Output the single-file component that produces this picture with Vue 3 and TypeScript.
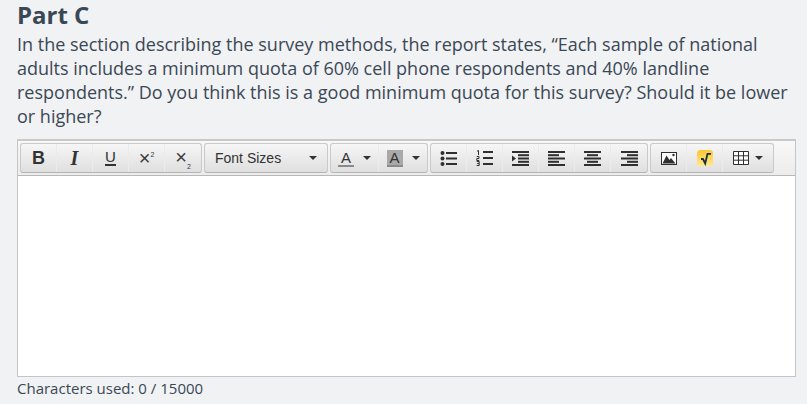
<script setup lang="ts">
const title = 'Part C'
const question = 'In the section describing the survey methods, the report states, “Each sample of national adults includes a minimum quota of 60% cell phone respondents and 40% landline respondents.” Do you think this is a good minimum quota for this survey? Should it be lower or higher?'
</script>

<template>
  <main class="page">
    <h2 class="title">{{ title }}</h2>
    <p class="question">{{ question }}</p>
    <section class="editor">
      <div class="toolbar">
        <div class="group">
          <button class="btn"><span class="bold">B</span></button>
          <button class="btn"><span class="italic">I</span></button>
          <button class="btn"><span class="under">U</span></button>
          <button class="btn"><span class="script">×<sup>2</sup></span></button>
          <button class="btn last"><span class="script">×<sub>2</sub></span></button>
        </div>
        <div class="group">
          <button class="btn select last"><span>Font Sizes</span><i class="caret"></i></button>
        </div>
        <div class="group">
          <button class="btn color"><span class="letter">A<b class="rule"></b></span><i class="caret"></i></button>
          <button class="btn color last"><span class="letter shaded">A<b class="rule"></b></span><i class="caret"></i></button>
        </div>
        <div class="group">
          <button class="btn">
            <svg width="18" height="15" viewBox="0 0 18 15"><g fill="#2f2f2f"><circle cx="2.5" cy="2" r="2"/><circle cx="2.5" cy="7.5" r="2"/><circle cx="2.5" cy="13" r="2"/><rect x="6" y="1" width="11" height="2"/><rect x="6" y="6.5" width="11" height="2"/><rect x="6" y="12" width="11" height="2"/></g></svg>
          </button>
          <button class="btn">
            <svg width="18" height="16" viewBox="0 0 18 16"><g fill="#2f2f2f"><rect x="7" y="1" width="10" height="2"/><rect x="7" y="7" width="10" height="2"/><rect x="7" y="13" width="10" height="2"/></g><g fill="none" stroke="#2f2f2f" stroke-width="1"><path d="M1 1.2 2.5 .5V5"/><path d="M.7 6.5H3V8.500H.8V10.500H3.200"/><path d="M.7 11.500H3.200V15.500H.7M1.200 13.500H3"/></g></svg>
          </button>
          <button class="btn">
            <svg width="17" height="15" viewBox="0 0 17 15"><g fill="#2f2f2f"><rect y="0" width="17" height="2"/><rect x="6" y="3.200" width="11" height="2"/><rect x="6" y="6.500" width="11" height="2"/><rect x="6" y="9.800" width="11" height="2"/><rect y="13" width="17" height="2"/><path d="M0 4.500 4 7.500 0 10.500Z"/></g></svg>
          </button>
          <button class="btn">
            <svg width="17" height="15" viewBox="0 0 17 15"><g fill="#2f2f2f"><rect width="17" height="2"/><rect y="3.200" width="11" height="2"/><rect y="6.500" width="17" height="2"/><rect y="9.800" width="11" height="2"/><rect y="13" width="17" height="2"/></g></svg>
          </button>
          <button class="btn">
            <svg width="17" height="15" viewBox="0 0 17 15"><g fill="#2f2f2f"><rect width="17" height="2"/><rect x="3" y="3.200" width="11" height="2"/><rect y="6.500" width="17" height="2"/><rect x="3" y="9.800" width="11" height="2"/><rect y="13" width="17" height="2"/></g></svg>
          </button>
          <button class="btn last">
            <svg width="17" height="15" viewBox="0 0 17 15"><g fill="#2f2f2f"><rect width="17" height="2"/><rect x="6" y="3.200" width="11" height="2"/><rect y="6.500" width="17" height="2"/><rect x="6" y="9.800" width="11" height="2"/><rect y="13" width="17" height="2"/></g></svg>
          </button>
        </div>
        <div class="group">
          <button class="btn">
            <svg width="16" height="13" viewBox="0 0 16 13"><rect x=".5" y=".5" width="15" height="12" fill="#fff" stroke="#2f2f2f"/><path d="M1.500 11.500 5.500 3.500 8.500 8 10 6 14.500 11.500Z" fill="#2f2f2f"/><circle cx="12.500" cy="3" r="1.200" fill="#2f2f2f"/></svg>
          </button>
          <button class="btn">
            <svg width="16" height="16" viewBox="0 0 16 16"><defs><linearGradient id="mathGrad" x1="0" y1="0" x2="0" y2="1"><stop offset="0" stop-color="#ffc531"/><stop offset="1" stop-color="#ffe98f"/></linearGradient></defs><rect width="16" height="16" rx="3.500" fill="url(#mathGrad)"/><path d="M4 9H6L8.200 13.500 10.500 3.800H14" fill="none" stroke="#12323d" stroke-width="1.800"/></svg>
          </button>
          <button class="btn tablebtn last">
            <svg width="16" height="14" viewBox="0 0 16 14"><path d="M.5.500H15.500V13.500H.5ZM.5 4.800H15.500M.5 9.200H15.500M5.500.500V13.500M10.500.500V13.500" fill="#fff" stroke="#2f2f2f"/></svg>
            <i class="caret"></i>
          </button>
        </div>
      </div>
      <div class="content"></div>
    </section>
    <div class="count">Characters used: 0 / 15000</div>
  </main>
</template>

<style scoped>
.page {
  width: 807px;
  height: 404px;
  box-sizing: border-box;
  padding: 0 11px 0 17px;
  background: #f1f2f4;
  font-family: "Open Sans", sans-serif;
  color: #3b4854;
  overflow: hidden;
}
.title {
  margin: 0 0 2px;
  font-size: 24px;
  line-height: 30px;
  font-weight: 700;
  color: #3a4754;
}
.question {
  margin: 0 0 11px;
  font-size: 18px;
  line-height: 24px;
  width: 775px;
  color: #3b4854;
}
.editor {
  width: 779px;
  height: 238px;
  box-sizing: border-box;
  border: 1px solid #c5c5c5;
  border-top: 2px solid #c9c9c9;
  background: #fff;
  display: flex;
  flex-direction: column;
}
.toolbar {
  height: 35px;
  box-sizing: border-box;
  display: flex;
  gap: 3px;
  padding: 2px 0 0 3px;
  background: linear-gradient(#f8f8f8, #ececec);
  border-bottom: 1px solid #b8b8b8;
}
.group {
  display: flex;
  box-sizing: border-box;
  height: 30px;
  border: 1px solid #c9c9c9;
  border-bottom-color: #b5b5b5;
  border-radius: 3px;
  background: linear-gradient(#f6f6f6, #dfdfdf);
  margin-left: -1px;
}
.btn {
  width: 36px;
  height: 28px;
  padding: 0;
  border: 0;
  border-right: 1px solid #ebebeb;
  background: transparent;
  display: flex;
  align-items: center;
  justify-content: center;
  color: #333;
  font-family: "Liberation Sans", sans-serif;
}
.btn.last { border-right: 0; }
.bold { font-weight: 700; font-size: 18px; }
.italic { font-family: "Liberation Serif", serif; font-style: italic; font-weight: 700; font-size: 20px; line-height: 18px; }
.under { font-size: 15px; line-height: 14px; border-bottom: 2px solid #333; }
.script { font-size: 20px; line-height: 17px; color: #3a3a3a; }
.script sup, .script sub { font-size: 7px; line-height: 0; }
.select {
  width: 122px;
  justify-content: space-between;
  padding: 0 10px;
  font-size: 14px;
  color: #333;
}
.caret {
  display: block;
  width: 0;
  height: 0;
  border-left: 4px solid transparent;
  border-right: 4px solid transparent;
  border-top: 4px solid #333;
}
.color { width: 48px; gap: 9px; }
.letter {
  position: relative;
  display: block;
  width: 16px;
  height: 16px;
  line-height: 16px;
  font-size: 15px;
  text-align: center;
}
.rule { position: absolute; left: 0; right: 0; bottom: -1px; height: 2px; background: #8a8a8a; }
.shaded { background: #a9a9a9; }
.tablebtn { width: 50px; gap: 6px; }
.content { flex: 1; }
.count {
  font-size: 15px;
  line-height: 20px;
  margin-top: 1px;
  color: #3b4854;
}
</style>

<style>
html, body { margin: 0; background: #f1f2f4; }
</style>
